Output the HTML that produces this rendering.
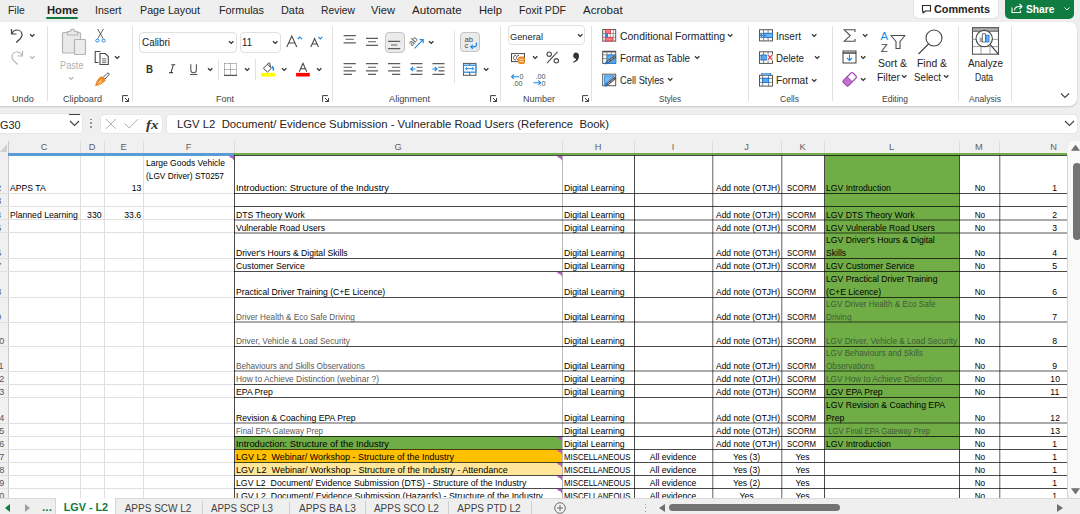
<!DOCTYPE html>
<html><head><meta charset="utf-8"><style>
html,body{margin:0;padding:0;}
body{width:1080px;height:514px;overflow:hidden;position:relative;background:#efefef;font-family:"Liberation Sans", sans-serif;}
body>div,body>svg{position:absolute;}
.t{white-space:pre;}
</style></head><body>
<div class="t" style="left:8.00px;top:5px;font-size:11px;line-height:11px;color:#242424;transform:scaleX(0.9417);transform-origin:left;">File</div>
<div class="t" style="left:46.60px;top:5px;font-size:11px;line-height:11px;color:#242424;font-weight:bold;transform:scaleX(1.0209);transform-origin:left;">Home</div>
<div class="t" style="left:95.00px;top:5px;font-size:11px;line-height:11px;color:#242424;transform:scaleX(0.9631);transform-origin:left;">Insert</div>
<div class="t" style="left:140.40px;top:5px;font-size:11px;line-height:11px;color:#242424;transform:scaleX(0.9712);transform-origin:left;">Page Layout</div>
<div class="t" style="left:218.80px;top:5px;font-size:11px;line-height:11px;color:#242424;transform:scaleX(0.9816);transform-origin:left;">Formulas</div>
<div class="t" style="left:280.90px;top:5px;font-size:11px;line-height:11px;color:#242424;transform:scaleX(0.9892);transform-origin:left;">Data</div>
<div class="t" style="left:320.50px;top:5px;font-size:11px;line-height:11px;color:#242424;transform:scaleX(0.9424);transform-origin:left;">Review</div>
<div class="t" style="left:371.00px;top:5px;font-size:11px;line-height:11px;color:#242424;transform:scaleX(1.0145);transform-origin:left;">View</div>
<div class="t" style="left:412.00px;top:5px;font-size:11px;line-height:11px;color:#242424;transform:scaleX(1.0532);transform-origin:left;">Automate</div>
<div class="t" style="left:478.50px;top:5px;font-size:11px;line-height:11px;color:#242424;transform:scaleX(1.0166);transform-origin:left;">Help</div>
<div class="t" style="left:518.50px;top:5px;font-size:11px;line-height:11px;color:#242424;transform:scaleX(0.9610);transform-origin:left;">Foxit PDF</div>
<div class="t" style="left:582.60px;top:5px;font-size:11px;line-height:11px;color:#242424;transform:scaleX(1.0443);transform-origin:left;">Acrobat</div>
<div style="left:46px;top:17px;width:32px;height:2px;background:#107c41;border-radius:1px"></div>
<div style="left:914px;top:-4px;width:84px;height:22px;background:#fff;border-radius:5px;box-shadow:0 0 0 1px #e3e3e3"></div>
<svg style="left:921px;top:4px" width="11" height="10" viewBox="0 0 11 10"><path d="M1.5 1.5h8v5.5h-5l-2.5 2v-2h-0.5z" fill="none" stroke="#242424" stroke-width="1.1" stroke-linejoin="round"/></svg>
<div class="t" style="left:934.00px;top:4px;font-size:10.5px;line-height:10.5px;color:#242424;font-weight:bold;transform:scaleX(1.0320);transform-origin:left;">Comments</div>
<div style="left:1005px;top:-4px;width:69px;height:22.6px;background:#107c41;border-radius:5px"></div>
<svg style="left:1011px;top:3px" width="12" height="11" viewBox="0 0 12 11"><path d="M1 4.5v5h8.5v-2" fill="none" stroke="#fff" stroke-width="1.1"/><path d="M3.5 7.5c0-3 2-4 5-4h1.5M8.5 1l2.5 2.5-2.5 2.5" fill="none" stroke="#fff" stroke-width="1.1"/></svg>
<div class="t" style="left:1026.00px;top:4px;font-size:10.5px;line-height:10.5px;color:#fff;font-weight:bold;transform:scaleX(0.9764);transform-origin:left;">Share</div>
<svg style="left:1064px;top:7px" width="6" height="4" viewBox="0 0 6 4"><path d="M0.5 0.5l2.5 2.5 2.5-2.5" fill="none" stroke="#fff" stroke-width="1"/></svg>
<div style="left:-10px;top:22px;width:1087px;height:84px;background:#fff;border-radius:8px;box-shadow:0 1px 2px rgba(0,0,0,0.18)"></div>
<div style="left:47px;top:26px;width:1px;height:75px;background:#e1e1e1;"></div>
<div style="left:132px;top:26px;width:1px;height:75px;background:#e1e1e1;"></div>
<div style="left:332px;top:26px;width:1px;height:75px;background:#e1e1e1;"></div>
<div style="left:500px;top:26px;width:1px;height:75px;background:#e1e1e1;"></div>
<div style="left:591px;top:26px;width:1px;height:75px;background:#e1e1e1;"></div>
<div style="left:748px;top:26px;width:1px;height:75px;background:#e1e1e1;"></div>
<div style="left:832px;top:26px;width:1px;height:75px;background:#e1e1e1;"></div>
<div style="left:958px;top:26px;width:1px;height:75px;background:#e1e1e1;"></div>
<div style="left:1011px;top:26px;width:1px;height:75px;background:#e1e1e1;"></div>
<div class="t" style="left:12.20px;top:94px;font-size:9.5px;line-height:9.5px;color:#424242;transform:scaleX(0.9596);transform-origin:left;">Undo</div>
<div class="t" style="left:63.00px;top:94px;font-size:9.5px;line-height:9.5px;color:#424242;transform:scaleX(0.9589);transform-origin:left;">Clipboard</div>
<div class="t" style="left:216.00px;top:94px;font-size:9.5px;line-height:9.5px;color:#424242;transform:scaleX(0.9466);transform-origin:left;">Font</div>
<div class="t" style="left:389.00px;top:94px;font-size:9.5px;line-height:9.5px;color:#424242;transform:scaleX(0.9704);transform-origin:left;">Alignment</div>
<div class="t" style="left:523.00px;top:94px;font-size:9.5px;line-height:9.5px;color:#424242;transform:scaleX(0.9468);transform-origin:left;">Number</div>
<div class="t" style="left:659.00px;top:94px;font-size:9.5px;line-height:9.5px;color:#424242;transform:scaleX(0.8502);transform-origin:left;">Styles</div>
<div class="t" style="left:780.00px;top:94px;font-size:9.5px;line-height:9.5px;color:#424242;transform:scaleX(0.8994);transform-origin:left;">Cells</div>
<div class="t" style="left:882.00px;top:94px;font-size:9.5px;line-height:9.5px;color:#424242;transform:scaleX(0.8946);transform-origin:left;">Editing</div>
<div class="t" style="left:969.00px;top:94px;font-size:9.5px;line-height:9.5px;color:#424242;transform:scaleX(0.9046);transform-origin:left;">Analysis</div>
<svg style="left:121.6px;top:95px" width="8" height="8" viewBox="0 0 8 8"><path d="M0.6 6.8V0.6H5.9M2.9 3.1L6.4 6.4M3.2 6.5H6.6V3" fill="none" stroke="#3a3a3a" stroke-width="1"/></svg>
<svg style="left:321.8px;top:95px" width="8" height="8" viewBox="0 0 8 8"><path d="M0.6 6.8V0.6H5.9M2.9 3.1L6.4 6.4M3.2 6.5H6.6V3" fill="none" stroke="#3a3a3a" stroke-width="1"/></svg>
<svg style="left:489.8px;top:95px" width="8" height="8" viewBox="0 0 8 8"><path d="M0.6 6.8V0.6H5.9M2.9 3.1L6.4 6.4M3.2 6.5H6.6V3" fill="none" stroke="#3a3a3a" stroke-width="1"/></svg>
<svg style="left:581.6px;top:95px" width="8" height="8" viewBox="0 0 8 8"><path d="M0.6 6.8V0.6H5.9M2.9 3.1L6.4 6.4M3.2 6.5H6.6V3" fill="none" stroke="#3a3a3a" stroke-width="1"/></svg>
<svg style="left:9px;top:27px" width="16" height="16" viewBox="0 0 16 16"><path d="M2.5 2v5h5" fill="none" stroke="#424242" stroke-width="1.2"/><path d="M2.8 6.8c1.2-2.8 3-3.8 5.2-3.8 2.8 0 5 2.2 5 5 0 2-1 3-2 4l-3.8 3.5" fill="none" stroke="#424242" stroke-width="1.2"/></svg>
<svg style="left:29.3px;top:32.9px" width="6.4" height="5.2" viewBox="0 0 6.4 5.2"><path d="M1 1.2l2.2 2.2 2.2 -2.2" fill="none" stroke="#333333" stroke-width="1.25"/></svg>
<svg style="left:9px;top:49px" width="16" height="16" viewBox="0 0 16 16"><path d="M13.5 2v5h-5" fill="none" stroke="#b8b8b8" stroke-width="1.2"/><path d="M13.2 6.8c-1.2-2.8-3-3.8-5.2-3.8-2.8 0-5 2.2-5 5 0 2 1 3 2 4l3.8 3.5" fill="none" stroke="#b8b8b8" stroke-width="1.2"/></svg>
<svg style="left:29.3px;top:54.9px" width="6.4" height="5.2" viewBox="0 0 6.4 5.2"><path d="M1 1.2l2.2 2.2 2.2 -2.2" fill="none" stroke="#b8b8b8" stroke-width="1.25"/></svg>
<svg style="left:60px;top:27px" width="28" height="30" viewBox="60 27 28 30"><path d="M62.5 33.5Q62.5 32.5 63.5 32.5H67.5V31.5H70.5Q70.5 29 72.5 29Q74.5 29 74.5 31.5H77.5V32.5H79.5Q80.5 32.5 80.5 33.5V52Q80.5 53 79.5 53H63.5Q62.5 53 62.5 52Z" fill="#e9e9e9" stroke="#b4b4b4" stroke-width="1.2"/><path d="M67.5 31.5V35H77.5V31.5" fill="none" stroke="#b4b4b4" stroke-width="1.1"/><rect x="74.5" y="39.5" width="11" height="15" rx="0.8" fill="#ececec" stroke="#b4b4b4" stroke-width="1.2"/></svg>
<div class="t" style="left:60.00px;top:61px;font-size:10px;line-height:10px;color:#b0b0b0;transform:scaleX(0.9188);transform-origin:left;">Paste</div>
<svg style="left:68.3px;top:75.9px" width="6.4" height="5.2" viewBox="0 0 6.4 5.2"><path d="M1 1.2l2.2 2.2 2.2 -2.2" fill="none" stroke="#b8b8b8" stroke-width="1.25"/></svg>
<svg style="left:92px;top:27px" width="20" height="62" viewBox="92 27 20 62"><path d="M97.6 29L103.2 38.6M103.4 29L97.8 38.6" fill="none" stroke="#4a4a4a" stroke-width="0.9"/><ellipse cx="97.4" cy="40.6" rx="1.7" ry="1.4" fill="none" stroke="#1e88e5" stroke-width="1"/><ellipse cx="103.6" cy="40.6" rx="1.7" ry="1.4" fill="none" stroke="#1e88e5" stroke-width="1"/><path d="M100.5 51.5H95.2V62.5H98.5" fill="none" stroke="#4a4a4a" stroke-width="1.1"/><path d="M100 53.5H105.2L108.3 56.6V64.5H100Z" fill="#fff" stroke="#4a4a4a" stroke-width="1.1"/><path d="M102 58.8H106.3M102 60.8H106.3M102 62.6H106.3" stroke="#4a4a4a" stroke-width="0.8"/><path d="M103 77.5L107 73.5Q108 72.6 108.8 73.4Q109.6 74.2 108.7 75.1L104.7 79.2Z" fill="#fff" stroke="#4a4a4a" stroke-width="1"/><path d="M101.8 76.6L105.4 80.2L103.2 82.4Q100.5 85 95.5 85.6Q96.5 80.6 99.3 77.9Z" fill="#f08a1c" stroke="#e07010" stroke-width="0.6"/><path d="M97.6 83.4L101.6 79.6M98.9 84.6L102.6 81" stroke="#fff" stroke-width="0.7"/></svg>
<svg style="left:114.3px;top:55.4px" width="6.4" height="5.2" viewBox="0 0 6.4 5.2"><path d="M1 1.2l2.2 2.2 2.2 -2.2" fill="none" stroke="#333333" stroke-width="1.25"/></svg>
<div style="left:139px;top:32.3px;width:98px;height:20.3px;background:#fff;border:1px solid #e0e0e0;border-radius:4px;box-sizing:border-box"></div>
<div class="t" style="left:141.50px;top:38px;font-size:10.2px;line-height:10.2px;color:#242424;transform:scaleX(0.9697);transform-origin:left;">Calibri</div>
<svg style="left:227.8px;top:39.9px" width="6.4" height="5.2" viewBox="0 0 6.4 5.2"><path d="M1 1.2l2.2 2.2 2.2 -2.2" fill="none" stroke="#333333" stroke-width="1.25"/></svg>
<div style="left:239.6px;top:32.3px;width:41px;height:20.3px;background:#fff;border:1px solid #e0e0e0;border-radius:4px;box-sizing:border-box"></div>
<div class="t" style="left:241.50px;top:38px;font-size:10.2px;line-height:10.2px;color:#242424;transform:scaleX(0.9453);transform-origin:left;">11</div>
<svg style="left:271.8px;top:39.9px" width="6.4" height="5.2" viewBox="0 0 6.4 5.2"><path d="M1 1.2l2.2 2.2 2.2 -2.2" fill="none" stroke="#333333" stroke-width="1.25"/></svg>
<svg style="left:284px;top:32px" width="42" height="18" viewBox="284 32 42 18"><path d="M286.8 47L291.8 36L296.8 47M288.6 43H295" fill="none" stroke="#4a4a4a" stroke-width="1.1"/><path d="M297.6 39.2L299.8 37L302 39.2" fill="none" stroke="#1e88e5" stroke-width="1.2"/><path d="M310.8 47L314.6 38.6L318.4 47M312.2 44H317" fill="none" stroke="#4a4a4a" stroke-width="1.1"/><path d="M318.4 36.8L320.4 38.8L322.4 36.8" fill="none" stroke="#1e88e5" stroke-width="1.2"/></svg>
<div class="t" style="left:146.20px;top:64px;font-size:11.5px;line-height:11.5px;color:#333;font-weight:bold;transform:scaleX(0.8421);transform-origin:left;">B</div>
<svg style="left:166px;top:60px" width="34" height="18" viewBox="166 60 34 18"><path d="M171.3 64.7H175.3M173.4 64.7L171 72.6M169.1 72.6H173" fill="none" stroke="#444" stroke-width="1.05"/><path d="M190.8 64.3V69.4Q190.8 72.7 193.6 72.7Q196.4 72.7 196.4 69.4V64.3" fill="none" stroke="#555" stroke-width="1.1"/><path d="M190 74.5H197.2" stroke="#555" stroke-width="1.1"/></svg>
<svg style="left:207.3px;top:66.9px" width="6.4" height="5.2" viewBox="0 0 6.4 5.2"><path d="M1 1.2l2.2 2.2 2.2 -2.2" fill="none" stroke="#333333" stroke-width="1.25"/></svg>
<div style="left:218px;top:59px;width:1px;height:21px;background:#e1e1e1;"></div>
<svg style="left:222px;top:60px" width="18" height="18" viewBox="222 60 18 18"><path d="M224.5 63.5H236.5M224.5 69.5H236.5M224.5 63.5V75M230.5 63.5V75M236.5 63.5V75" fill="none" stroke="#555" stroke-width="0.9" stroke-dasharray="0.9 1.1"/><path d="M224 75.4H237" stroke="#555" stroke-width="1.3"/></svg>
<svg style="left:243.8px;top:66.9px" width="6.4" height="5.2" viewBox="0 0 6.4 5.2"><path d="M1 1.2l2.2 2.2 2.2 -2.2" fill="none" stroke="#333333" stroke-width="1.25"/></svg>
<div style="left:255px;top:59px;width:1px;height:21px;background:#e1e1e1;"></div>
<svg style="left:259px;top:60px" width="18" height="18" viewBox="259 60 18 18"><path d="M263.4 68.3L267.5 64.2L271.5 68.2L267.5 72.1Z" fill="#fff" stroke="#444" stroke-width="1"/><path d="M267.5 64.2L268.4 63.1Q269.2 62.4 269.8 63.2L270.4 67.1" fill="none" stroke="#444" stroke-width="1"/><path d="M272 66.3Q274 67.8 273.3 70.6" fill="none" stroke="#1e88e5" stroke-width="1.5"/><rect x="261.1" y="72.9" width="13.9" height="3.7" fill="#ffff00"/></svg>
<svg style="left:280.8px;top:66.9px" width="6.4" height="5.2" viewBox="0 0 6.4 5.2"><path d="M1 1.2l2.2 2.2 2.2 -2.2" fill="none" stroke="#333333" stroke-width="1.25"/></svg>
<svg style="left:294px;top:60px" width="18" height="18" viewBox="294 60 18 18"><path d="M299.3 71.8L303 63.2L306.8 71.8M300.6 68.7H305.4" fill="none" stroke="#444" stroke-width="1.05"/><rect x="296.1" y="72.9" width="13.7" height="3.6" fill="#ff0000"/></svg>
<svg style="left:316.3px;top:66.9px" width="6.4" height="5.2" viewBox="0 0 6.4 5.2"><path d="M1 1.2l2.2 2.2 2.2 -2.2" fill="none" stroke="#333333" stroke-width="1.25"/></svg>
<div style="left:384.5px;top:32.4px;width:20px;height:20.2px;background:#ebebeb;border:1px solid #c4c4c4;border-radius:4px;box-sizing:border-box"></div>
<div style="left:454px;top:31px;width:1px;height:52px;background:#e1e1e1;"></div>
<div style="left:460.4px;top:32.4px;width:20.1px;height:20.1px;background:#ebebeb;border:1px solid #c4c4c4;border-radius:4px;box-sizing:border-box"></div>
<svg style="left:336px;top:28px" width="160" height="56" viewBox="336 28 160 56"><path d="M343.6 35.6H355.8M345.5 39.2H353.8M343.6 42.8H355.8M366 38.3H378M368 41.7H376M366 45.3H378M388 41.4H400.2M391 45.0H397.2M388 48.6H400.2M343.6 63.6H355.8M343.6 67.2H352M343.6 70.8H355.8M343.6 74.3H352M366 63.6H378M368 67.2H376M366 70.8H378M368 74.3H376M388 63.6H400.2M392 67.2H400.2M388 70.8H400.2M392 74.3H400.2M410.5 63.6H422.5M416.5 67.2H422.5M416.5 70.8H422.5M410.5 74.3H422.5M432.5 63.6H444.5M438.5 67.2H444.5M438.5 70.8H444.5M432.5 74.3H444.5" stroke="#5c5c5c" stroke-width="1.15" fill="none"/><path d="M415.5 69H410.8M413 66.8L410.8 69L413 71.2" stroke="#1e88e5" stroke-width="1.2" fill="none"/><path d="M432.3 69H437M434.8 66.8L437 69L434.8 71.2" stroke="#1e88e5" stroke-width="1.2" fill="none"/><text x="0" y="0" font-family="Liberation Sans" font-size="8.5" fill="#4a4a4a" transform="translate(412 46.5) rotate(-50)">ab</text><path d="M414.5 48.3L423 39.8M419.5 39.6H423.2V43.3" stroke="#1e88e5" stroke-width="1.1" fill="none"/><text x="464.5" y="42" font-family="Liberation Sans" font-size="7.6" fill="#4a4a4a">ab</text><text x="464.5" y="47.8" font-family="Liberation Sans" font-size="7.6" fill="#4a4a4a">c</text><path d="M476.5 42.5V44.5C476.5 46 475.5 46.8 474 46.8H470.8M472.8 44.8L470.8 46.8L472.8 48.8" stroke="#1e88e5" stroke-width="1.2" fill="none"/><rect x="463.5" y="63.4" width="12.4" height="11.9" fill="#fff" stroke="#555" stroke-width="1"/><rect x="463.5" y="65.2" width="12.4" height="7" fill="#fff" stroke="#1e88e5" stroke-width="1.2"/><path d="M469.7 63.4V65.2M469.7 72.2V75.3" stroke="#555" stroke-width="1"/><path d="M465.6 68.7H473.8M467.2 67.1L465.6 68.7L467.2 70.3M472.2 67.1L473.8 68.7L472.2 70.3" stroke="#1e88e5" stroke-width="1" fill="none"/></svg>
<svg style="left:428.3px;top:39.9px" width="6.4" height="5.2" viewBox="0 0 6.4 5.2"><path d="M1 1.2l2.2 2.2 2.2 -2.2" fill="none" stroke="#333333" stroke-width="1.25"/></svg>
<svg style="left:482.8px;top:66.9px" width="6.4" height="5.2" viewBox="0 0 6.4 5.2"><path d="M1 1.2l2.2 2.2 2.2 -2.2" fill="none" stroke="#333333" stroke-width="1.25"/></svg>
<div style="left:507.7px;top:25.4px;width:77.6px;height:20px;background:#fff;border:1px solid #e0e0e0;border-radius:4px;box-sizing:border-box"></div>
<div class="t" style="left:510.00px;top:32px;font-size:9.5px;line-height:9.5px;color:#242424;transform:scaleX(0.9760);transform-origin:left;">General</div>
<svg style="left:576.8px;top:33.4px" width="6.4" height="5.2" viewBox="0 0 6.4 5.2"><path d="M1 1.2l2.2 2.2 2.2 -2.2" fill="none" stroke="#333333" stroke-width="1.25"/></svg>
<svg style="left:504px;top:44px" width="88" height="46" viewBox="504 44 88 46"><rect x="511.5" y="53.6" width="13" height="8" fill="#fff" stroke="#4a4a4a" stroke-width="1"/><path d="M516 55.5C514 55.5 513.5 56.5 513.5 57.8C513.5 59 514 60 516 60M519 55.5C517 55.5 516.5 56.5 516.5 57.8C516.5 59 517 60 519 60" stroke="#4a4a4a" stroke-width="0.9" fill="none"/><rect x="518.2" y="56.6" width="6.6" height="7.4" rx="1.6" fill="#f08a1c"/><path d="M519.4 59.3H523.6M519.4 61.5H523.6" stroke="#fff" stroke-width="0.8"/><path d="M547 63.2L557.5 51.8" stroke="#4a4a4a" stroke-width="1.1"/><circle cx="549.2" cy="54.2" r="2.2" fill="none" stroke="#4a4a4a" stroke-width="1.1"/><circle cx="556.3" cy="60.8" r="2.2" fill="none" stroke="#4a4a4a" stroke-width="1.1"/><path d="M575.8 52.6C577.8 52.6 579 54 579 56.2C579 59.5 576.8 61.8 573.3 62.8L572.9 62C574.8 61.2 575.9 60 576.2 58.8C574.5 58.8 573.2 57.6 573.2 55.8C573.2 54 574.3 52.6 575.8 52.6Z" fill="#333"/><path d="M519 76.7H511.6M513.8 74.5L511.6 76.7L513.8 78.9" stroke="#1e88e5" stroke-width="1.1" fill="none"/><text x="519.5" y="79.3" font-family="Liberation Sans" font-size="7.2" fill="#4a4a4a">0</text><text x="512.5" y="86" font-family="Liberation Sans" font-size="7.2" fill="#4a4a4a">.00</text><text x="535.5" y="79.3" font-family="Liberation Sans" font-size="7.2" fill="#4a4a4a">.00</text><path d="M533.3 82.7H540.6M538.4 80.5L540.6 82.7L538.4 84.9" stroke="#1e88e5" stroke-width="1.1" fill="none"/><text x="539.5" y="86" font-family="Liberation Sans" font-size="7.2" fill="#4a4a4a">.0</text></svg>
<svg style="left:532.3px;top:54.9px" width="6.4" height="5.2" viewBox="0 0 6.4 5.2"><path d="M1 1.2l2.2 2.2 2.2 -2.2" fill="none" stroke="#333333" stroke-width="1.25"/></svg>
<svg style="left:600px;top:27px" width="18" height="17" viewBox="600 27 18 17"><rect x="602.7" y="29.5" width="13" height="11.6" fill="#fff" stroke="#555" stroke-width="1"/><path d="M602.7 33.5H615.7M602.7 37.3H615.7M605.3 29.5V41.1M610.3 29.5V41.1M613.3 29.5V41.1" stroke="#777" stroke-width="0.7"/><rect x="605.3" y="29.6" width="5" height="3.9" fill="#f47a86" stroke="#e3343f" stroke-width="0.8"/><rect x="605.3" y="33.6" width="2.8" height="3.6" fill="#1e88e5"/><rect x="605.3" y="37.4" width="7" height="3.6" fill="#f47a86" stroke="#e3343f" stroke-width="0.8"/></svg>
<div class="t" style="left:620.00px;top:32px;font-size:10.2px;line-height:10.2px;color:#242424;transform:scaleX(1.0244);transform-origin:left;">Conditional Formatting</div>
<svg style="left:726.8px;top:33.4px" width="6.4" height="5.2" viewBox="0 0 6.4 5.2"><path d="M1 1.2l2.2 2.2 2.2 -2.2" fill="none" stroke="#333333" stroke-width="1.25"/></svg>
<svg style="left:600px;top:49px" width="18" height="17" viewBox="600 49 18 17"><rect x="602.7" y="51.4" width="13" height="12" fill="#fff" stroke="#555" stroke-width="1"/><path d="M602.7 51.6H615.7" stroke="#555" stroke-width="1.6"/><path d="M602.7 54.8H615.7M602.7 58.6H615.7M606.9 51.4V63.4M611.3 51.4V63.4" stroke="#666" stroke-width="0.7"/><path d="M607 55H615.7V63.4H607Z" fill="#5aa7ec" stroke="#1e88e5" stroke-width="0.8"/><path d="M605.8 63.2L615.6 56.2" stroke="#444" stroke-width="2.6"/><path d="M606.6 62.6L614.8 56.8" stroke="#fff" stroke-width="1" stroke-dasharray="1 0.8"/><path d="M604.6 64.2Q605.2 61.8 607.6 61.4L608.6 62.6Q607.6 64.8 604.6 64.2Z" fill="#1e78d5"/></svg>
<div class="t" style="left:620.00px;top:54px;font-size:10.2px;line-height:10.2px;color:#242424;transform:scaleX(0.9608);transform-origin:left;">Format as Table</div>
<svg style="left:693.8px;top:55.4px" width="6.4" height="5.2" viewBox="0 0 6.4 5.2"><path d="M1 1.2l2.2 2.2 2.2 -2.2" fill="none" stroke="#333333" stroke-width="1.25"/></svg>
<svg style="left:600px;top:71px" width="18" height="17" viewBox="600 71 18 17"><rect x="602.7" y="74.2" width="13" height="11.5" fill="#fff" stroke="#555" stroke-width="1"/><path d="M604.6 75.8H614.4L604.6 84.4Z" fill="#7dbaf0" stroke="#1e88e5" stroke-width="0.9"/><path d="M605.8 85.4L615.6 77.6" stroke="#444" stroke-width="2.6"/><path d="M606.6 84.8L614.8 78.2" stroke="#fff" stroke-width="1" stroke-dasharray="1 0.8"/><path d="M604.4 86.4Q605 84 607.4 83.6L608.4 84.8Q607.4 87 604.4 86.4Z" fill="#1e78d5"/></svg>
<div class="t" style="left:620.00px;top:76px;font-size:10.2px;line-height:10.2px;color:#242424;transform:scaleX(0.9143);transform-origin:left;">Cell Styles</div>
<svg style="left:666.8px;top:77.4px" width="6.4" height="5.2" viewBox="0 0 6.4 5.2"><path d="M1 1.2l2.2 2.2 2.2 -2.2" fill="none" stroke="#333333" stroke-width="1.25"/></svg>
<svg style="left:757px;top:27px" width="18" height="17" viewBox="757 27 18 17"><rect x="759.5" y="29.7" width="13" height="11.2" fill="#fff" stroke="#555" stroke-width="1"/><path d="M763.6 29.7V40.9M768.1 29.7V40.9M759.5 33.4H772.5M759.5 37.3H772.5" stroke="#666" stroke-width="0.8"/><rect x="764" y="33.3" width="8.6" height="4.2" fill="#6fb3ee" stroke="#1e78d5" stroke-width="0.9"/><path d="M766.5 35.3H760.2M762.4 33.1L760.2 35.3L762.4 37.5" fill="none" stroke="#2a8ae0" stroke-width="1.2"/></svg>
<div class="t" style="left:776.00px;top:32px;font-size:10.2px;line-height:10.2px;color:#242424;transform:scaleX(0.9810);transform-origin:left;">Insert</div>
<svg style="left:810.8px;top:33.4px" width="6.4" height="5.2" viewBox="0 0 6.4 5.2"><path d="M1 1.2l2.2 2.2 2.2 -2.2" fill="none" stroke="#333333" stroke-width="1.25"/></svg>
<svg style="left:757px;top:49px" width="18" height="17" viewBox="757 49 18 17"><rect x="759.5" y="51.8" width="13" height="11.6" fill="#fff" stroke="#555" stroke-width="1"/><path d="M763.6 51.8V63.4M768.1 51.8V63.4M759.5 55.3H772.5M759.5 59.8H772.5" stroke="#666" stroke-width="0.8"/><path d="M761 55H766L767.6 57.5L766 60H761Z" fill="#5aa7ec" stroke="#1e78d5" stroke-width="0.9"/><rect x="767.2" y="54.4" width="5.6" height="6.2" fill="#fff"/><path d="M768 55.2L772 59.6M772 55.2L768 59.6" stroke="#e8333f" stroke-width="1.2"/></svg>
<div class="t" style="left:776.00px;top:54px;font-size:10.2px;line-height:10.2px;color:#242424;transform:scaleX(0.9507);transform-origin:left;">Delete</div>
<svg style="left:813.8px;top:55.4px" width="6.4" height="5.2" viewBox="0 0 6.4 5.2"><path d="M1 1.2l2.2 2.2 2.2 -2.2" fill="none" stroke="#333333" stroke-width="1.25"/></svg>
<svg style="left:757px;top:71px" width="18" height="17" viewBox="757 71 18 17"><rect x="759.5" y="75.3" width="13" height="10.8" fill="#fff" stroke="#555" stroke-width="1"/><path d="M762.6 75.3V86.1M768.6 75.3V86.1M759.5 78.4H772.5M759.5 82.4H772.5" stroke="#666" stroke-width="0.8"/><rect x="762.6" y="78.2" width="6" height="4.4" fill="#5aa7ec" stroke="#1e78d5" stroke-width="0.9"/><path d="M761.6 73.9H770.6M761.6 72.9V74.9M770.6 72.9V74.9" stroke="#2a8ae0" stroke-width="1.1"/></svg>
<div class="t" style="left:776.00px;top:76px;font-size:10.2px;line-height:10.2px;color:#242424;transform:scaleX(0.9918);transform-origin:left;">Format</div>
<svg style="left:810.8px;top:77.9px" width="6.4" height="5.2" viewBox="0 0 6.4 5.2"><path d="M1 1.2l2.2 2.2 2.2 -2.2" fill="none" stroke="#333333" stroke-width="1.25"/></svg>
<svg style="left:840px;top:26px" width="20" height="20" viewBox="840 26 20 20"><path d="M855 32V29.8H844.3L850.2 35.6L844.3 41.2H855V39" fill="none" stroke="#4a4a4a" stroke-width="1.1" stroke-linejoin="miter"/></svg>
<svg style="left:861.8px;top:33.4px" width="6.4" height="5.2" viewBox="0 0 6.4 5.2"><path d="M1 1.2l2.2 2.2 2.2 -2.2" fill="none" stroke="#333333" stroke-width="1.25"/></svg>
<svg style="left:842px;top:50px" width="15" height="14" viewBox="0 0 15 14"><rect x="1" y="1" width="13" height="12" fill="#fff" stroke="#424242" stroke-width="1"/><path d="M1 3h13" stroke="#424242" stroke-width="1.5"/><path d="M7.5 4.5v6M5 8l2.5 2.5 2.5-2.5" fill="none" stroke="#1e88e5" stroke-width="1.1"/></svg>
<svg style="left:859.8px;top:55.4px" width="6.4" height="5.2" viewBox="0 0 6.4 5.2"><path d="M1 1.2l2.2 2.2 2.2 -2.2" fill="none" stroke="#333333" stroke-width="1.25"/></svg>
<svg style="left:840px;top:70px" width="20" height="20" viewBox="840 70 20 20"><path d="M843.5 80.5L851 73Q852 72 853 73L856 76Q857 77 856 78L848.5 85.5Q847.5 86.5 846.5 85.5L843.5 82.5Q842.5 81.5 843.5 80.5Z" fill="#fff" stroke="#a040b0" stroke-width="1.1"/><path d="M843.5 80.5L847.2 76.8L852.2 81.8L848.5 85.5Q847.5 86.5 846.5 85.5L843.5 82.5Q842.5 81.5 843.5 80.5Z" fill="#c070d0" stroke="#a040b0" stroke-width="1"/></svg>
<svg style="left:859.8px;top:77.4px" width="6.4" height="5.2" viewBox="0 0 6.4 5.2"><path d="M1 1.2l2.2 2.2 2.2 -2.2" fill="none" stroke="#333333" stroke-width="1.25"/></svg>
<svg style="left:876px;top:26px" width="34" height="30" viewBox="876 26 34 30"><text x="880.6" y="40" font-family="Liberation Sans" font-size="11.5" fill="#1e88e5">A</text><text x="880.8" y="52" font-family="Liberation Sans" font-size="11.5" fill="#4a4a4a">Z</text><path d="M891 35.5H905L900 41.5V48.5H896V41.5Z" fill="none" stroke="#4a4a4a" stroke-width="1.1" stroke-linejoin="round"/></svg>
<div class="t" style="left:878.00px;top:59px;font-size:10.2px;line-height:10.2px;color:#242424;transform:scaleX(1.0243);transform-origin:left;">Sort &amp;</div>
<div class="t" style="left:877.00px;top:73px;font-size:10.2px;line-height:10.2px;color:#242424;transform:scaleX(1.0159);transform-origin:left;">Filter</div>
<svg style="left:900.8px;top:74.4px" width="6.4" height="5.2" viewBox="0 0 6.4 5.2"><path d="M1 1.2l2.2 2.2 2.2 -2.2" fill="none" stroke="#333333" stroke-width="1.25"/></svg>
<svg style="left:917px;top:28px" width="28" height="27" viewBox="0 0 28 27"><circle cx="17" cy="10" r="8" fill="none" stroke="#424242" stroke-width="1.1"/><path d="M11.5 16l-10 10" stroke="#424242" stroke-width="1.1"/></svg>
<div class="t" style="left:917.00px;top:59px;font-size:10.2px;line-height:10.2px;color:#242424;transform:scaleX(1.0186);transform-origin:left;">Find &amp;</div>
<div class="t" style="left:914.00px;top:73px;font-size:10.2px;line-height:10.2px;color:#242424;transform:scaleX(0.9531);transform-origin:left;">Select</div>
<svg style="left:942.8px;top:74.4px" width="6.4" height="5.2" viewBox="0 0 6.4 5.2"><path d="M1 1.2l2.2 2.2 2.2 -2.2" fill="none" stroke="#333333" stroke-width="1.25"/></svg>
<svg style="left:968px;top:25px" width="34" height="33" viewBox="968 25 34 33"><rect x="972.5" y="27.8" width="26" height="26.4" fill="#fff" stroke="#555" stroke-width="1.1"/><rect x="972.5" y="27.8" width="26" height="3.4" fill="#b4b4b4" stroke="#555" stroke-width="1"/><path d="M972.5 39.4H998.5M972.5 46.6H998.5M981 46.6V54.2M990 46.6V54.2" stroke="#888" stroke-width="0.8"/><circle cx="984.2" cy="38.6" r="8.2" fill="#fff" stroke="#444" stroke-width="1.1"/><rect x="979.6" y="37.6" width="2.4" height="4.4" fill="#a8a8a8"/><rect x="982.3" y="33.8" width="3.2" height="8.2" fill="#fff" stroke="#555" stroke-width="0.8"/><rect x="986" y="35.2" width="3" height="6.8" fill="#6fb3ee" stroke="#1e78d5" stroke-width="0.8"/><path d="M990 44.4L998.6 54.4" stroke="#444" stroke-width="1.2"/></svg>
<div class="t" style="left:968.00px;top:59px;font-size:10.2px;line-height:10.2px;color:#242424;transform:scaleX(0.9655);transform-origin:left;">Analyze</div>
<div class="t" style="left:975.00px;top:73px;font-size:10.2px;line-height:10.2px;color:#242424;transform:scaleX(0.8360);transform-origin:left;">Data</div>
<svg style="left:1060px;top:92px" width="10" height="7" viewBox="0 0 10 7"><path d="M1 1.5l4 4 4-4" fill="none" stroke="#424242" stroke-width="1.1"/></svg>
<div style="left:-10px;top:114px;width:92px;height:19px;background:#fff;border-radius:4px;box-shadow:0 0 0 1px #e6e6e6"></div>
<div class="t" style="left:0.00px;top:120px;font-size:11px;line-height:11px;color:#242424;transform:scaleX(0.9857);transform-origin:left;">G30</div>
<div style="left:69px;top:113.5px;width:11px;height:1.2px;background:#424242;"></div>
<svg style="left:69px;top:120px" width="11" height="7" viewBox="0 0 11 7"><path d="M1 1l4.5 4.5 4.5-4.5" fill="none" stroke="#424242" stroke-width="1.1"/></svg>
<div style="left:90.3px;top:118.5px;width:1.8px;height:1.8px;background:#7a7a7a;border-radius:1px"></div>
<div style="left:90.3px;top:122.3px;width:1.8px;height:1.8px;background:#7a7a7a;border-radius:1px"></div>
<div style="left:90.3px;top:126.1px;width:1.8px;height:1.8px;background:#7a7a7a;border-radius:1px"></div>
<div style="left:101px;top:115px;width:61px;height:18px;background:#fff;border-radius:4px;box-shadow:0 0 0 1px #e6e6e6"></div>
<svg style="left:104px;top:117px" width="14" height="14" viewBox="104 117 14 14"><path d="M106 119L115.8 128.8M115.8 119L106 128.8" stroke="#b0b0b0" stroke-width="1"/></svg>
<svg style="left:122px;top:117px" width="18" height="14" viewBox="122 117 18 14"><path d="M124.5 123.5L129.2 128L138 119.2" fill="none" stroke="#b0b0b0" stroke-width="1"/></svg>
<div class="t" style="left:145.80px;top:118px;font-size:13px;line-height:13px;color:#333;font-weight:bold;font-style:italic;font-family:&quot;Liberation Serif&quot;, serif;transform:scaleX(1.1527);transform-origin:left;">fx</div>
<div style="left:166.6px;top:115px;width:910.6px;height:18px;background:#fff;border-radius:4px;box-shadow:0 0 0 1px #e6e6e6"></div>
<div class="t" style="left:177.00px;top:119px;font-size:11.2px;line-height:11.2px;color:#242424;transform:scaleX(1.0107);transform-origin:left;">LGV L2  Document/ Evidence Submission - Vulnerable Road Users (Reference  Book)</div>
<svg style="left:1064px;top:120px" width="11" height="7" viewBox="0 0 11 7"><path d="M1 1l4.5 4.5 4.5-4.5" fill="none" stroke="#424242" stroke-width="1.1"/></svg>
<div style="left:0px;top:134px;width:1067px;height:19px;background:#f0f0f0;"></div>
<div style="left:8px;top:141px;width:1px;height:12px;background:#dcdcdc;"></div>
<div style="left:80px;top:141px;width:1px;height:12px;background:#dcdcdc;"></div>
<div style="left:104px;top:141px;width:1px;height:12px;background:#dcdcdc;"></div>
<div style="left:143px;top:141px;width:1px;height:12px;background:#dcdcdc;"></div>
<div style="left:234px;top:141px;width:1px;height:12px;background:#dcdcdc;"></div>
<div style="left:562px;top:141px;width:1px;height:12px;background:#dcdcdc;"></div>
<div style="left:634px;top:141px;width:1px;height:12px;background:#dcdcdc;"></div>
<div style="left:712px;top:141px;width:1px;height:12px;background:#dcdcdc;"></div>
<div style="left:781px;top:141px;width:1px;height:12px;background:#dcdcdc;"></div>
<div style="left:824px;top:141px;width:1px;height:12px;background:#dcdcdc;"></div>
<div style="left:959px;top:141px;width:1px;height:12px;background:#dcdcdc;"></div>
<div style="left:999px;top:141px;width:1px;height:12px;background:#dcdcdc;"></div>
<div class="t" style="left:40.64px;top:143px;font-size:9.3px;line-height:9.3px;color:#616161;">C</div>
<div class="t" style="left:88.64px;top:143px;font-size:9.3px;line-height:9.3px;color:#616161;">D</div>
<div class="t" style="left:120.40px;top:143px;font-size:9.3px;line-height:9.3px;color:#616161;">E</div>
<div class="t" style="left:185.66px;top:143px;font-size:9.3px;line-height:9.3px;color:#616161;">F</div>
<div class="t" style="left:394.38px;top:143px;font-size:9.3px;line-height:9.3px;color:#616161;">G</div>
<div class="t" style="left:594.64px;top:143px;font-size:9.3px;line-height:9.3px;color:#616161;">H</div>
<div class="t" style="left:671.70px;top:143px;font-size:9.3px;line-height:9.3px;color:#616161;">I</div>
<div class="t" style="left:744.17px;top:143px;font-size:9.3px;line-height:9.3px;color:#616161;">J</div>
<div class="t" style="left:799.40px;top:143px;font-size:9.3px;line-height:9.3px;color:#616161;">K</div>
<div class="t" style="left:888.91px;top:143px;font-size:9.3px;line-height:9.3px;color:#616161;">L</div>
<div class="t" style="left:975.12px;top:143px;font-size:9.3px;line-height:9.3px;color:#616161;">M</div>
<div class="t" style="left:1050.14px;top:143px;font-size:9.3px;line-height:9.3px;color:#616161;">N</div>
<svg style="left:0px;top:140px" width="8" height="13" viewBox="0 0 8 13"><path d="M7 4v8h-7z" fill="#d0d0d0"/></svg>
<div style="left:8px;top:155px;width:1059px;height:343px;background:#fff;"></div>
<div style="left:0px;top:155px;width:8px;height:343px;background:#f0f0f0;"></div>
<div style="left:8px;top:141px;width:1px;height:357px;background:#c9c9c9;"></div>
<div style="left:825px;top:155px;width:134px;height:294px;background:#70ad47;"></div>
<div style="left:235px;top:436px;width:327px;height:13px;background:#70ad47;"></div>
<div style="left:235px;top:449px;width:327px;height:13px;background:#ffc000;"></div>
<div style="left:235px;top:462px;width:327px;height:13px;background:#ffe699;"></div>
<div style="left:0px;top:193px;width:234px;height:1px;background:#e0e0e0;"></div>
<div style="left:0px;top:206px;width:234px;height:1px;background:#e0e0e0;"></div>
<div style="left:0px;top:219px;width:234px;height:1px;background:#e0e0e0;"></div>
<div style="left:0px;top:232px;width:234px;height:1px;background:#e0e0e0;"></div>
<div style="left:0px;top:258px;width:234px;height:1px;background:#e0e0e0;"></div>
<div style="left:0px;top:271px;width:234px;height:1px;background:#e0e0e0;"></div>
<div style="left:0px;top:297px;width:234px;height:1px;background:#e0e0e0;"></div>
<div style="left:0px;top:322px;width:234px;height:1px;background:#e0e0e0;"></div>
<div style="left:0px;top:346px;width:234px;height:1px;background:#e0e0e0;"></div>
<div style="left:0px;top:371px;width:234px;height:1px;background:#e0e0e0;"></div>
<div style="left:0px;top:384px;width:234px;height:1px;background:#e0e0e0;"></div>
<div style="left:0px;top:397px;width:234px;height:1px;background:#e0e0e0;"></div>
<div style="left:0px;top:423px;width:234px;height:1px;background:#e0e0e0;"></div>
<div style="left:0px;top:436px;width:234px;height:1px;background:#e0e0e0;"></div>
<div style="left:0px;top:449px;width:234px;height:1px;background:#e0e0e0;"></div>
<div style="left:0px;top:462px;width:234px;height:1px;background:#e0e0e0;"></div>
<div style="left:0px;top:475px;width:234px;height:1px;background:#e0e0e0;"></div>
<div style="left:0px;top:488px;width:234px;height:1px;background:#e0e0e0;"></div>
<div style="left:80px;top:155px;width:1px;height:343px;background:#e0e0e0;"></div>
<div style="left:104px;top:155px;width:1px;height:343px;background:#e0e0e0;"></div>
<div style="left:143px;top:155px;width:1px;height:343px;background:#e0e0e0;"></div>
<div style="left:562px;top:155px;width:1px;height:343px;background:#b8b8b8;"></div>
<div style="left:1067px;top:155px;width:1px;height:343px;background:#d4d4d4;"></div>
<div style="left:234px;top:155px;width:1px;height:343px;background:rgba(0,0,0,0.71);"></div>
<div style="left:634px;top:155px;width:1px;height:343px;background:rgba(0,0,0,0.71);"></div>
<div style="left:824px;top:155px;width:1px;height:343px;background:rgba(0,0,0,0.71);"></div>
<div style="left:959px;top:155px;width:1px;height:343px;background:rgba(0,0,0,0.71);"></div>
<div style="left:712px;top:155px;width:1px;height:343px;background:rgba(0,0,0,0.44);"></div>
<div style="left:713px;top:155px;width:1px;height:343px;background:rgba(0,0,0,0.18);"></div>
<div style="left:781px;top:155px;width:1px;height:343px;background:rgba(0,0,0,0.44);"></div>
<div style="left:782px;top:155px;width:1px;height:343px;background:rgba(0,0,0,0.18);"></div>
<div style="left:999px;top:155px;width:1px;height:343px;background:rgba(0,0,0,0.44);"></div>
<div style="left:1000px;top:155px;width:1px;height:343px;background:rgba(0,0,0,0.18);"></div>
<div style="left:234px;top:193px;width:833px;height:1px;background:rgba(0,0,0,0.71);"></div>
<div style="left:234px;top:206px;width:833px;height:1px;background:rgba(0,0,0,0.71);"></div>
<div style="left:234px;top:258px;width:833px;height:1px;background:rgba(0,0,0,0.71);"></div>
<div style="left:234px;top:271px;width:833px;height:1px;background:rgba(0,0,0,0.71);"></div>
<div style="left:234px;top:297px;width:833px;height:1px;background:rgba(0,0,0,0.71);"></div>
<div style="left:234px;top:346px;width:833px;height:1px;background:rgba(0,0,0,0.71);"></div>
<div style="left:234px;top:384px;width:833px;height:1px;background:rgba(0,0,0,0.71);"></div>
<div style="left:234px;top:397px;width:833px;height:1px;background:rgba(0,0,0,0.71);"></div>
<div style="left:234px;top:436px;width:833px;height:1px;background:rgba(0,0,0,0.71);"></div>
<div style="left:234px;top:449px;width:833px;height:1px;background:rgba(0,0,0,0.71);"></div>
<div style="left:234px;top:462px;width:833px;height:1px;background:rgba(0,0,0,0.71);"></div>
<div style="left:234px;top:475px;width:833px;height:1px;background:rgba(0,0,0,0.71);"></div>
<div style="left:234px;top:488px;width:833px;height:1px;background:rgba(0,0,0,0.71);"></div>
<div style="left:234px;top:219px;width:833px;height:2px;background:rgba(0,0,0,0.33);"></div>
<div style="left:234px;top:232px;width:833px;height:2px;background:rgba(0,0,0,0.33);"></div>
<div style="left:234px;top:321px;width:833px;height:2px;background:rgba(0,0,0,0.33);"></div>
<div style="left:234px;top:370px;width:833px;height:2px;background:rgba(0,0,0,0.33);"></div>
<div style="left:234px;top:422px;width:833px;height:2px;background:rgba(0,0,0,0.33);"></div>
<div style="left:8px;top:153px;width:226px;height:3px;background:#5b9bd5;"></div>
<div style="left:234px;top:152.5px;width:833px;height:2.5px;background:#70ad47;"></div>
<div style="left:234px;top:155px;width:833px;height:1px;background:rgba(0,0,0,0.71);"></div>
<svg style="left:228.8px;top:155.5px" width="5.2" height="5" viewBox="0 0 5.2 5"><path d="M0 0H5.2V5L3.6 2.6L1.2 1.4Z" fill="#bb55cc"/></svg>
<svg style="left:556.8px;top:155.5px" width="5.2" height="5" viewBox="0 0 5.2 5"><path d="M0 0H5.2V5L3.6 2.6L1.2 1.4Z" fill="#bb55cc"/></svg>
<svg style="left:556.8px;top:271.5px" width="5.2" height="5" viewBox="0 0 5.2 5"><path d="M0 0H5.2V5L3.6 2.6L1.2 1.4Z" fill="#bb55cc"/></svg>
<svg style="left:556.8px;top:436.5px" width="5.2" height="5" viewBox="0 0 5.2 5"><path d="M0 0H5.2V5L3.6 2.6L1.2 1.4Z" fill="#bb55cc"/></svg>
<svg style="left:556.8px;top:449.5px" width="5.2" height="5" viewBox="0 0 5.2 5"><path d="M0 0H5.2V5L3.6 2.6L1.2 1.4Z" fill="#bb55cc"/></svg>
<svg style="left:556.8px;top:462.5px" width="5.2" height="5" viewBox="0 0 5.2 5"><path d="M0 0H5.2V5L3.6 2.6L1.2 1.4Z" fill="#bb55cc"/></svg>
<svg style="left:556.8px;top:475.5px" width="5.2" height="5" viewBox="0 0 5.2 5"><path d="M0 0H5.2V5L3.6 2.6L1.2 1.4Z" fill="#bb55cc"/></svg>
<svg style="left:556.8px;top:488.5px" width="5.2" height="5" viewBox="0 0 5.2 5"><path d="M0 0H5.2V5L3.6 2.6L1.2 1.4Z" fill="#bb55cc"/></svg>
<div class="t" style="left:-3.85px;top:183px;font-size:9.5px;line-height:9.5px;color:#555;transform:scaleX(0.9500);transform-origin:center;">2</div>
<div class="t" style="left:-3.85px;top:196px;font-size:9.5px;line-height:9.5px;color:#555;transform:scaleX(0.9500);transform-origin:center;">3</div>
<div class="t" style="left:-3.85px;top:210px;font-size:9.5px;line-height:9.5px;color:#555;transform:scaleX(0.9500);transform-origin:center;">4</div>
<div class="t" style="left:-3.85px;top:223px;font-size:9.5px;line-height:9.5px;color:#555;transform:scaleX(0.9500);transform-origin:center;">5</div>
<div class="t" style="left:-3.85px;top:248px;font-size:9.5px;line-height:9.5px;color:#555;transform:scaleX(0.9500);transform-origin:center;">6</div>
<div class="t" style="left:-3.85px;top:261px;font-size:9.5px;line-height:9.5px;color:#555;transform:scaleX(0.9500);transform-origin:center;">7</div>
<div class="t" style="left:-3.85px;top:287px;font-size:9.5px;line-height:9.5px;color:#555;transform:scaleX(0.9500);transform-origin:center;">8</div>
<div class="t" style="left:-3.85px;top:312px;font-size:9.5px;line-height:9.5px;color:#555;transform:scaleX(0.9500);transform-origin:center;">9</div>
<div class="t" style="left:-6.49px;top:336px;font-size:9.5px;line-height:9.5px;color:#555;transform:scaleX(0.9500);transform-origin:center;">10</div>
<div class="t" style="left:-6.14px;top:361px;font-size:9.5px;line-height:9.5px;color:#555;transform:scaleX(0.9500);transform-origin:center;">11</div>
<div class="t" style="left:-6.49px;top:374px;font-size:9.5px;line-height:9.5px;color:#555;transform:scaleX(0.9500);transform-origin:center;">12</div>
<div class="t" style="left:-6.49px;top:387px;font-size:9.5px;line-height:9.5px;color:#555;transform:scaleX(0.9500);transform-origin:center;">13</div>
<div class="t" style="left:-6.49px;top:413px;font-size:9.5px;line-height:9.5px;color:#555;transform:scaleX(0.9500);transform-origin:center;">14</div>
<div class="t" style="left:-6.49px;top:426px;font-size:9.5px;line-height:9.5px;color:#555;transform:scaleX(0.9500);transform-origin:center;">15</div>
<div class="t" style="left:-6.49px;top:439px;font-size:9.5px;line-height:9.5px;color:#555;transform:scaleX(0.9500);transform-origin:center;">16</div>
<div class="t" style="left:-6.49px;top:452px;font-size:9.5px;line-height:9.5px;color:#555;transform:scaleX(0.9500);transform-origin:center;">17</div>
<div class="t" style="left:-6.49px;top:465px;font-size:9.5px;line-height:9.5px;color:#555;transform:scaleX(0.9500);transform-origin:center;">18</div>
<div class="t" style="left:-6.49px;top:478px;font-size:9.5px;line-height:9.5px;color:#555;transform:scaleX(0.9500);transform-origin:center;">19</div>
<div class="t" style="left:-6.49px;top:491px;font-size:9.5px;line-height:9.5px;color:#555;transform:scaleX(0.9500);transform-origin:center;">20</div>
<div class="t" style="left:10.00px;top:184px;font-size:9.3px;line-height:9.3px;color:#000;transform:scaleX(0.9300);transform-origin:left;">APPS TA</div>
<div class="t" style="left:130.66px;top:184px;font-size:9.3px;line-height:9.3px;color:#000;transform:scaleX(0.9300);transform-origin:right;">13</div>
<div class="t" style="left:145.80px;top:159px;font-size:9.3px;line-height:9.3px;color:#000;transform:scaleX(0.9151);transform-origin:left;">Large Goods Vehicle</div>
<div class="t" style="left:145.80px;top:172px;font-size:9.3px;line-height:9.3px;color:#000;transform:scaleX(0.8932);transform-origin:left;">(LGV Driver) ST0257</div>
<div class="t" style="left:236.00px;top:184px;font-size:9.3px;line-height:9.3px;color:#000;">Introduction: Structure of the Industry</div>
<div class="t" style="left:564.00px;top:184px;font-size:9.3px;line-height:9.3px;color:#000;transform:scaleX(0.9395);transform-origin:left;">Digital Learning</div>
<div class="t" style="left:715.60px;top:184px;font-size:9.3px;line-height:9.3px;color:#000;transform:scaleX(0.9106);transform-origin:left;">Add note (OTJH)</div>
<div class="t" style="left:787.40px;top:184px;font-size:9.3px;line-height:9.3px;color:#000;transform:scaleX(0.8379);transform-origin:left;">SCORM</div>
<div class="t" style="left:826.00px;top:184px;font-size:9.3px;line-height:9.3px;color:#000;transform:scaleX(0.9300);transform-origin:left;">LGV Introduction</div>
<div class="t" style="left:973.95px;top:184px;font-size:9.3px;line-height:9.3px;color:#000;transform:scaleX(0.8830);transform-origin:center;">No</div>
<div class="t" style="left:1052.11px;top:184px;font-size:9.3px;line-height:9.3px;color:#000;transform:scaleX(0.9300);transform-origin:center;">1</div>
<div class="t" style="left:10.00px;top:211px;font-size:9.3px;line-height:9.3px;color:#000;transform:scaleX(0.9300);transform-origin:left;">Planned Learning</div>
<div class="t" style="left:86.48px;top:211px;font-size:9.3px;line-height:9.3px;color:#000;transform:scaleX(0.9300);transform-origin:right;">330</div>
<div class="t" style="left:122.89px;top:211px;font-size:9.3px;line-height:9.3px;color:#000;transform:scaleX(0.9300);transform-origin:right;">33.6</div>
<div class="t" style="left:236.00px;top:211px;font-size:9.3px;line-height:9.3px;color:#000;transform:scaleX(0.9300);transform-origin:left;">DTS Theory Work</div>
<div class="t" style="left:564.00px;top:211px;font-size:9.3px;line-height:9.3px;color:#000;transform:scaleX(0.9395);transform-origin:left;">Digital Learning</div>
<div class="t" style="left:715.60px;top:211px;font-size:9.3px;line-height:9.3px;color:#000;transform:scaleX(0.9106);transform-origin:left;">Add note (OTJH)</div>
<div class="t" style="left:787.40px;top:211px;font-size:9.3px;line-height:9.3px;color:#000;transform:scaleX(0.8379);transform-origin:left;">SCORM</div>
<div class="t" style="left:826.00px;top:211px;font-size:9.3px;line-height:9.3px;color:#000;transform:scaleX(0.9300);transform-origin:left;">LGV DTS Theory Work</div>
<div class="t" style="left:973.95px;top:211px;font-size:9.3px;line-height:9.3px;color:#000;transform:scaleX(0.8830);transform-origin:center;">No</div>
<div class="t" style="left:1052.11px;top:211px;font-size:9.3px;line-height:9.3px;color:#000;transform:scaleX(0.9300);transform-origin:center;">2</div>
<div class="t" style="left:236.00px;top:224px;font-size:9.3px;line-height:9.3px;color:#000;transform:scaleX(0.9300);transform-origin:left;">Vulnerable Road Users</div>
<div class="t" style="left:564.00px;top:224px;font-size:9.3px;line-height:9.3px;color:#000;transform:scaleX(0.9395);transform-origin:left;">Digital Learning</div>
<div class="t" style="left:715.60px;top:224px;font-size:9.3px;line-height:9.3px;color:#000;transform:scaleX(0.9106);transform-origin:left;">Add note (OTJH)</div>
<div class="t" style="left:787.40px;top:224px;font-size:9.3px;line-height:9.3px;color:#000;transform:scaleX(0.8379);transform-origin:left;">SCORM</div>
<div class="t" style="left:826.00px;top:224px;font-size:9.3px;line-height:9.3px;color:#000;transform:scaleX(0.9300);transform-origin:left;">LGV Vulnerable Road Users</div>
<div class="t" style="left:973.95px;top:224px;font-size:9.3px;line-height:9.3px;color:#000;transform:scaleX(0.8830);transform-origin:center;">No</div>
<div class="t" style="left:1052.11px;top:224px;font-size:9.3px;line-height:9.3px;color:#000;transform:scaleX(0.9300);transform-origin:center;">3</div>
<div class="t" style="left:236.00px;top:249px;font-size:9.3px;line-height:9.3px;color:#000;transform:scaleX(0.9300);transform-origin:left;">Driver&#x27;s Hours &amp; Digital Skills</div>
<div class="t" style="left:564.00px;top:249px;font-size:9.3px;line-height:9.3px;color:#000;transform:scaleX(0.9395);transform-origin:left;">Digital Learning</div>
<div class="t" style="left:715.60px;top:249px;font-size:9.3px;line-height:9.3px;color:#000;transform:scaleX(0.9106);transform-origin:left;">Add note (OTJH)</div>
<div class="t" style="left:787.40px;top:249px;font-size:9.3px;line-height:9.3px;color:#000;transform:scaleX(0.8379);transform-origin:left;">SCORM</div>
<div class="t" style="left:826.00px;top:236px;font-size:9.3px;line-height:9.3px;color:#000;transform:scaleX(0.9300);transform-origin:left;">LGV Driver&#x27;s Hours &amp; Digital</div>
<div class="t" style="left:826.00px;top:249px;font-size:9.3px;line-height:9.3px;color:#000;transform:scaleX(0.9300);transform-origin:left;">Skills</div>
<div class="t" style="left:973.95px;top:249px;font-size:9.3px;line-height:9.3px;color:#000;transform:scaleX(0.8830);transform-origin:center;">No</div>
<div class="t" style="left:1052.11px;top:249px;font-size:9.3px;line-height:9.3px;color:#000;transform:scaleX(0.9300);transform-origin:center;">4</div>
<div class="t" style="left:236.00px;top:262px;font-size:9.3px;line-height:9.3px;color:#000;transform:scaleX(0.9300);transform-origin:left;">Customer Service</div>
<div class="t" style="left:564.00px;top:262px;font-size:9.3px;line-height:9.3px;color:#000;transform:scaleX(0.9395);transform-origin:left;">Digital Learning</div>
<div class="t" style="left:715.60px;top:262px;font-size:9.3px;line-height:9.3px;color:#000;transform:scaleX(0.9106);transform-origin:left;">Add note (OTJH)</div>
<div class="t" style="left:787.40px;top:262px;font-size:9.3px;line-height:9.3px;color:#000;transform:scaleX(0.8379);transform-origin:left;">SCORM</div>
<div class="t" style="left:826.00px;top:262px;font-size:9.3px;line-height:9.3px;color:#000;transform:scaleX(0.9300);transform-origin:left;">LGV Customer Service</div>
<div class="t" style="left:973.95px;top:262px;font-size:9.3px;line-height:9.3px;color:#000;transform:scaleX(0.8830);transform-origin:center;">No</div>
<div class="t" style="left:1052.11px;top:262px;font-size:9.3px;line-height:9.3px;color:#000;transform:scaleX(0.9300);transform-origin:center;">5</div>
<div class="t" style="left:236.00px;top:288px;font-size:9.3px;line-height:9.3px;color:#000;transform:scaleX(0.9300);transform-origin:left;">Practical Driver Training (C+E Licence)</div>
<div class="t" style="left:564.00px;top:288px;font-size:9.3px;line-height:9.3px;color:#000;transform:scaleX(0.9395);transform-origin:left;">Digital Learning</div>
<div class="t" style="left:715.60px;top:288px;font-size:9.3px;line-height:9.3px;color:#000;transform:scaleX(0.9106);transform-origin:left;">Add note (OTJH)</div>
<div class="t" style="left:787.40px;top:288px;font-size:9.3px;line-height:9.3px;color:#000;transform:scaleX(0.8379);transform-origin:left;">SCORM</div>
<div class="t" style="left:826.00px;top:275px;font-size:9.3px;line-height:9.3px;color:#000;transform:scaleX(0.9300);transform-origin:left;">LGV Practical Driver Training</div>
<div class="t" style="left:826.00px;top:288px;font-size:9.3px;line-height:9.3px;color:#000;transform:scaleX(0.9300);transform-origin:left;">(C+E Licence)</div>
<div class="t" style="left:973.95px;top:288px;font-size:9.3px;line-height:9.3px;color:#000;transform:scaleX(0.8830);transform-origin:center;">No</div>
<div class="t" style="left:1052.11px;top:288px;font-size:9.3px;line-height:9.3px;color:#000;transform:scaleX(0.9300);transform-origin:center;">6</div>
<div class="t" style="left:236.00px;top:314px;font-size:8.2px;line-height:8.2px;color:#595959;">Driver Health &amp; Eco Safe Driving</div>
<div class="t" style="left:564.00px;top:313px;font-size:9.3px;line-height:9.3px;color:#000;transform:scaleX(0.9395);transform-origin:left;">Digital Learning</div>
<div class="t" style="left:715.60px;top:313px;font-size:9.3px;line-height:9.3px;color:#000;transform:scaleX(0.9106);transform-origin:left;">Add note (OTJH)</div>
<div class="t" style="left:787.40px;top:313px;font-size:9.3px;line-height:9.3px;color:#000;transform:scaleX(0.8379);transform-origin:left;">SCORM</div>
<div class="t" style="left:826.00px;top:301px;font-size:8.2px;line-height:8.2px;color:#3f5c36;">LGV Driver Health &amp; Eco Safe</div>
<div class="t" style="left:826.00px;top:314px;font-size:8.2px;line-height:8.2px;color:#3f5c36;">Driving</div>
<div class="t" style="left:973.95px;top:313px;font-size:9.3px;line-height:9.3px;color:#000;transform:scaleX(0.8830);transform-origin:center;">No</div>
<div class="t" style="left:1052.11px;top:313px;font-size:9.3px;line-height:9.3px;color:#000;transform:scaleX(0.9300);transform-origin:center;">7</div>
<div class="t" style="left:236.00px;top:338px;font-size:8.2px;line-height:8.2px;color:#595959;transform:scaleX(1.0142);transform-origin:left;">Driver, Vehicle &amp; Load Security</div>
<div class="t" style="left:564.00px;top:337px;font-size:9.3px;line-height:9.3px;color:#000;transform:scaleX(0.9395);transform-origin:left;">Digital Learning</div>
<div class="t" style="left:715.60px;top:337px;font-size:9.3px;line-height:9.3px;color:#000;transform:scaleX(0.9106);transform-origin:left;">Add note (OTJH)</div>
<div class="t" style="left:787.40px;top:337px;font-size:9.3px;line-height:9.3px;color:#000;transform:scaleX(0.8379);transform-origin:left;">SCORM</div>
<div class="t" style="left:826.00px;top:338px;font-size:8.2px;line-height:8.2px;color:#3f5c36;">LGV Driver, Vehicle &amp; Load Security</div>
<div class="t" style="left:973.95px;top:337px;font-size:9.3px;line-height:9.3px;color:#000;transform:scaleX(0.8830);transform-origin:center;">No</div>
<div class="t" style="left:1052.11px;top:337px;font-size:9.3px;line-height:9.3px;color:#000;transform:scaleX(0.9300);transform-origin:center;">8</div>
<div class="t" style="left:236.00px;top:363px;font-size:8.2px;line-height:8.2px;color:#595959;">Behaviours and Skills Observations</div>
<div class="t" style="left:564.00px;top:362px;font-size:9.3px;line-height:9.3px;color:#000;transform:scaleX(0.9395);transform-origin:left;">Digital Learning</div>
<div class="t" style="left:715.60px;top:362px;font-size:9.3px;line-height:9.3px;color:#000;transform:scaleX(0.9106);transform-origin:left;">Add note (OTJH)</div>
<div class="t" style="left:787.40px;top:362px;font-size:9.3px;line-height:9.3px;color:#000;transform:scaleX(0.8379);transform-origin:left;">SCORM</div>
<div class="t" style="left:826.00px;top:350px;font-size:8.2px;line-height:8.2px;color:#3f5c36;">LGV Behaviours and Skills</div>
<div class="t" style="left:826.00px;top:363px;font-size:8.2px;line-height:8.2px;color:#3f5c36;">Observations</div>
<div class="t" style="left:973.95px;top:362px;font-size:9.3px;line-height:9.3px;color:#000;transform:scaleX(0.8830);transform-origin:center;">No</div>
<div class="t" style="left:1052.11px;top:362px;font-size:9.3px;line-height:9.3px;color:#000;transform:scaleX(0.9300);transform-origin:center;">9</div>
<div class="t" style="left:236.00px;top:376px;font-size:8.2px;line-height:8.2px;color:#595959;transform:scaleX(1.0236);transform-origin:left;">How to Achieve Distinction (webinar ?)</div>
<div class="t" style="left:564.00px;top:375px;font-size:9.3px;line-height:9.3px;color:#000;transform:scaleX(0.9395);transform-origin:left;">Digital Learning</div>
<div class="t" style="left:715.60px;top:375px;font-size:9.3px;line-height:9.3px;color:#000;transform:scaleX(0.9106);transform-origin:left;">Add note (OTJH)</div>
<div class="t" style="left:787.40px;top:375px;font-size:9.3px;line-height:9.3px;color:#000;transform:scaleX(0.8379);transform-origin:left;">SCORM</div>
<div class="t" style="left:826.00px;top:376px;font-size:8.2px;line-height:8.2px;color:#3f5c36;transform:scaleX(1.0075);transform-origin:left;">LGV How to Achieve Distinction</div>
<div class="t" style="left:973.95px;top:375px;font-size:9.3px;line-height:9.3px;color:#000;transform:scaleX(0.8830);transform-origin:center;">No</div>
<div class="t" style="left:1049.53px;top:375px;font-size:9.3px;line-height:9.3px;color:#000;transform:scaleX(0.9300);transform-origin:center;">10</div>
<div class="t" style="left:236.00px;top:388px;font-size:9.3px;line-height:9.3px;color:#000;transform:scaleX(0.9300);transform-origin:left;">EPA Prep</div>
<div class="t" style="left:564.00px;top:388px;font-size:9.3px;line-height:9.3px;color:#000;transform:scaleX(0.9395);transform-origin:left;">Digital Learning</div>
<div class="t" style="left:715.60px;top:388px;font-size:9.3px;line-height:9.3px;color:#000;transform:scaleX(0.9106);transform-origin:left;">Add note (OTJH)</div>
<div class="t" style="left:787.40px;top:388px;font-size:9.3px;line-height:9.3px;color:#000;transform:scaleX(0.8379);transform-origin:left;">SCORM</div>
<div class="t" style="left:826.00px;top:388px;font-size:9.3px;line-height:9.3px;color:#000;transform:scaleX(0.9300);transform-origin:left;">LGV EPA Prep</div>
<div class="t" style="left:973.95px;top:388px;font-size:9.3px;line-height:9.3px;color:#000;transform:scaleX(0.8830);transform-origin:center;">No</div>
<div class="t" style="left:1049.87px;top:388px;font-size:9.3px;line-height:9.3px;color:#000;transform:scaleX(0.9300);transform-origin:center;">11</div>
<div class="t" style="left:236.00px;top:414px;font-size:9.3px;line-height:9.3px;color:#000;transform:scaleX(0.9300);transform-origin:left;">Revision &amp; Coaching EPA Prep</div>
<div class="t" style="left:564.00px;top:414px;font-size:9.3px;line-height:9.3px;color:#000;transform:scaleX(0.9395);transform-origin:left;">Digital Learning</div>
<div class="t" style="left:715.60px;top:414px;font-size:9.3px;line-height:9.3px;color:#000;transform:scaleX(0.9106);transform-origin:left;">Add note (OTJH)</div>
<div class="t" style="left:787.40px;top:414px;font-size:9.3px;line-height:9.3px;color:#000;transform:scaleX(0.8379);transform-origin:left;">SCORM</div>
<div class="t" style="left:826.00px;top:401px;font-size:9.3px;line-height:9.3px;color:#000;transform:scaleX(0.9300);transform-origin:left;">LGV Revision &amp; Coaching EPA</div>
<div class="t" style="left:826.00px;top:414px;font-size:9.3px;line-height:9.3px;color:#000;transform:scaleX(0.9300);transform-origin:left;">Prep</div>
<div class="t" style="left:973.95px;top:414px;font-size:9.3px;line-height:9.3px;color:#000;transform:scaleX(0.8830);transform-origin:center;">No</div>
<div class="t" style="left:1049.53px;top:414px;font-size:9.3px;line-height:9.3px;color:#000;transform:scaleX(0.9300);transform-origin:center;">12</div>
<div class="t" style="left:236.00px;top:428px;font-size:8.2px;line-height:8.2px;color:#595959;transform:scaleX(0.9721);transform-origin:left;">Final EPA Gateway Prep</div>
<div class="t" style="left:564.00px;top:427px;font-size:9.3px;line-height:9.3px;color:#000;transform:scaleX(0.9395);transform-origin:left;">Digital Learning</div>
<div class="t" style="left:715.60px;top:427px;font-size:9.3px;line-height:9.3px;color:#000;transform:scaleX(0.9106);transform-origin:left;">Add note (OTJH)</div>
<div class="t" style="left:787.40px;top:427px;font-size:9.3px;line-height:9.3px;color:#000;transform:scaleX(0.8379);transform-origin:left;">SCORM</div>
<div class="t" style="left:826.00px;top:428px;font-size:8.2px;line-height:8.2px;color:#3f5c36;transform:scaleX(0.9417);transform-origin:left;"> LGV Final EPA Gateway Prep</div>
<div class="t" style="left:973.95px;top:427px;font-size:9.3px;line-height:9.3px;color:#000;transform:scaleX(0.8830);transform-origin:center;">No</div>
<div class="t" style="left:1049.53px;top:427px;font-size:9.3px;line-height:9.3px;color:#000;transform:scaleX(0.9300);transform-origin:center;">13</div>
<div class="t" style="left:236.00px;top:440px;font-size:9.3px;line-height:9.3px;color:#000;">Introduction: Structure of the Industry</div>
<div class="t" style="left:564.00px;top:440px;font-size:9.3px;line-height:9.3px;color:#000;transform:scaleX(0.9395);transform-origin:left;">Digital Learning</div>
<div class="t" style="left:715.60px;top:440px;font-size:9.3px;line-height:9.3px;color:#000;transform:scaleX(0.9106);transform-origin:left;">Add note (OTJH)</div>
<div class="t" style="left:787.40px;top:440px;font-size:9.3px;line-height:9.3px;color:#000;transform:scaleX(0.8379);transform-origin:left;">SCORM</div>
<div class="t" style="left:826.00px;top:440px;font-size:9.3px;line-height:9.3px;color:#000;transform:scaleX(0.9300);transform-origin:left;">LGV Introduction</div>
<div class="t" style="left:973.95px;top:440px;font-size:9.3px;line-height:9.3px;color:#000;transform:scaleX(0.8830);transform-origin:center;">No</div>
<div class="t" style="left:1052.11px;top:440px;font-size:9.3px;line-height:9.3px;color:#000;transform:scaleX(0.9300);transform-origin:center;">1</div>
<div class="t" style="left:236.00px;top:453px;font-size:9.3px;line-height:9.3px;color:#000;transform:scaleX(0.9669);transform-origin:left;">LGV L2  Webinar/ Workshop - Structure of the Industry</div>
<div class="t" style="left:564.00px;top:453px;font-size:9.3px;line-height:9.3px;color:#000;transform:scaleX(0.8400);transform-origin:left;">MISCELLANEOUS</div>
<div class="t" style="left:647.93px;top:453px;font-size:9.3px;line-height:9.3px;color:#000;transform:scaleX(0.9300);transform-origin:center;">All evidence</div>
<div class="t" style="left:731.94px;top:453px;font-size:9.3px;line-height:9.3px;color:#000;transform:scaleX(0.9300);transform-origin:center;">Yes (3)</div>
<div class="t" style="left:794.91px;top:453px;font-size:9.3px;line-height:9.3px;color:#000;transform:scaleX(0.9300);transform-origin:center;">Yes</div>
<div class="t" style="left:973.95px;top:453px;font-size:9.3px;line-height:9.3px;color:#000;transform:scaleX(0.8830);transform-origin:center;">No</div>
<div class="t" style="left:1052.11px;top:453px;font-size:9.3px;line-height:9.3px;color:#000;transform:scaleX(0.9300);transform-origin:center;">1</div>
<div class="t" style="left:236.00px;top:466px;font-size:9.3px;line-height:9.3px;color:#000;transform:scaleX(0.9698);transform-origin:left;">LGV L2  Webinar/ Workshop - Structure of the Industry - Attendance</div>
<div class="t" style="left:564.00px;top:466px;font-size:9.3px;line-height:9.3px;color:#000;transform:scaleX(0.8400);transform-origin:left;">MISCELLANEOUS</div>
<div class="t" style="left:647.93px;top:466px;font-size:9.3px;line-height:9.3px;color:#000;transform:scaleX(0.9300);transform-origin:center;">All evidence</div>
<div class="t" style="left:731.94px;top:466px;font-size:9.3px;line-height:9.3px;color:#000;transform:scaleX(0.9300);transform-origin:center;">Yes (3)</div>
<div class="t" style="left:794.91px;top:466px;font-size:9.3px;line-height:9.3px;color:#000;transform:scaleX(0.9300);transform-origin:center;">Yes</div>
<div class="t" style="left:973.95px;top:466px;font-size:9.3px;line-height:9.3px;color:#000;transform:scaleX(0.8830);transform-origin:center;">No</div>
<div class="t" style="left:1052.11px;top:466px;font-size:9.3px;line-height:9.3px;color:#000;transform:scaleX(0.9300);transform-origin:center;">1</div>
<div class="t" style="left:236.00px;top:479px;font-size:9.3px;line-height:9.3px;color:#000;transform:scaleX(0.9426);transform-origin:left;">LGV L2  Document/ Evidence Submission (DTS) - Structure of the Industry</div>
<div class="t" style="left:564.00px;top:479px;font-size:9.3px;line-height:9.3px;color:#000;transform:scaleX(0.8400);transform-origin:left;">MISCELLANEOUS</div>
<div class="t" style="left:647.93px;top:479px;font-size:9.3px;line-height:9.3px;color:#000;transform:scaleX(0.9300);transform-origin:center;">All evidence</div>
<div class="t" style="left:731.94px;top:479px;font-size:9.3px;line-height:9.3px;color:#000;transform:scaleX(0.9300);transform-origin:center;">Yes (2)</div>
<div class="t" style="left:794.91px;top:479px;font-size:9.3px;line-height:9.3px;color:#000;transform:scaleX(0.9300);transform-origin:center;">Yes</div>
<div class="t" style="left:973.95px;top:479px;font-size:9.3px;line-height:9.3px;color:#000;transform:scaleX(0.8830);transform-origin:center;">No</div>
<div class="t" style="left:1052.11px;top:479px;font-size:9.3px;line-height:9.3px;color:#000;transform:scaleX(0.9300);transform-origin:center;">1</div>
<div class="t" style="left:236.00px;top:492px;font-size:9.3px;line-height:9.3px;color:#000;transform:scaleX(0.9476);transform-origin:left;">LGV L2  Document/ Evidence Submission (Hazards) - Structure of the Industry</div>
<div class="t" style="left:564.00px;top:492px;font-size:9.3px;line-height:9.3px;color:#000;transform:scaleX(0.8400);transform-origin:left;">MISCELLANEOUS</div>
<div class="t" style="left:647.93px;top:492px;font-size:9.3px;line-height:9.3px;color:#000;transform:scaleX(0.9300);transform-origin:center;">All evidence</div>
<div class="t" style="left:738.91px;top:492px;font-size:9.3px;line-height:9.3px;color:#000;transform:scaleX(0.9300);transform-origin:center;">Yes</div>
<div class="t" style="left:794.91px;top:492px;font-size:9.3px;line-height:9.3px;color:#000;transform:scaleX(0.9300);transform-origin:center;">Yes</div>
<div class="t" style="left:973.95px;top:492px;font-size:9.3px;line-height:9.3px;color:#000;transform:scaleX(0.8830);transform-origin:center;">No</div>
<div class="t" style="left:1052.11px;top:492px;font-size:9.3px;line-height:9.3px;color:#000;transform:scaleX(0.9300);transform-origin:center;">1</div>
<div style="left:1068px;top:137px;width:12px;height:361px;background:#efefef;"></div>
<div style="left:1068px;top:141px;width:20px;height:357px;background:#f9f9f9;border-radius:6px 0 0 6px"></div>
<svg style="left:1071px;top:143px" width="9" height="8" viewBox="0 0 9 8"><path d="M0.5 7.5l4-5.5 4 5.5z" fill="#707070" stroke="#707070" stroke-width="0.6" stroke-linejoin="round"/></svg>
<div style="left:1072.8px;top:162.5px;width:8px;height:77px;background:#737373;border-radius:4px"></div>
<svg style="left:1071px;top:488px" width="9" height="8" viewBox="0 0 9 8"><path d="M0.5 0.5l4 5.5 4-5.5z" fill="#707070" stroke="#707070" stroke-width="0.6" stroke-linejoin="round"/></svg>
<div style="left:0px;top:498px;width:1080px;height:16px;background:#efefef;"></div>
<div style="left:0px;top:498px;width:1080px;height:1px;background:#d9d9d9;"></div>
<svg style="left:5px;top:504px" width="5" height="8" viewBox="0 0 5 8"><path d="M5 0v8l-5-4z" fill="#107c41"/></svg>
<svg style="left:25px;top:504px" width="5" height="8" viewBox="0 0 5 8"><path d="M0 0v8l5-4z" fill="#a0a0a0"/></svg>
<div class="t" style="left:41.50px;top:502px;font-size:11px;line-height:11px;color:#107c41;font-weight:bold;transform:scaleX(1.0903);transform-origin:left;">...</div>
<div style="left:56px;top:498px;width:59px;height:16px;background:#fff;box-shadow:-1px 0 0 #d6d6d6, 1px 0 0 #d6d6d6"></div>
<div class="t" style="left:63.70px;top:502px;font-size:10.8px;line-height:10.8px;color:#107c41;font-weight:bold;">LGV - L2</div>
<div class="t" style="left:124.70px;top:504px;font-size:10px;line-height:10px;color:#424242;">APPS SCW L2</div>
<div class="t" style="left:211.00px;top:504px;font-size:10px;line-height:10px;color:#424242;transform:scaleX(0.9725);transform-origin:left;">APPS SCP L3</div>
<div class="t" style="left:298.50px;top:504px;font-size:10px;line-height:10px;color:#424242;transform:scaleX(1.0150);transform-origin:left;">APPS BA L3</div>
<div class="t" style="left:373.90px;top:504px;font-size:10px;line-height:10px;color:#424242;">APPS SCO L2</div>
<div class="t" style="left:457.30px;top:504px;font-size:10px;line-height:10px;color:#424242;">APPS PTD L2</div>
<div style="left:201.8px;top:501px;width:1px;height:13px;background:#d0d0d0;"></div>
<div style="left:289px;top:501px;width:1px;height:13px;background:#d0d0d0;"></div>
<div style="left:365px;top:501px;width:1px;height:13px;background:#d0d0d0;"></div>
<div style="left:448.4px;top:501px;width:1px;height:13px;background:#d0d0d0;"></div>
<div style="left:531px;top:501px;width:1px;height:13px;background:#d0d0d0;"></div>
<svg style="left:554px;top:502px" width="12" height="12" viewBox="0 0 12 12"><circle cx="6" cy="6" r="5.3" fill="none" stroke="#616161" stroke-width="0.9"/><path d="M6 3v6M3 6h6" stroke="#616161" stroke-width="0.9"/></svg>
<div style="left:644.5px;top:503.5px;width:1.3px;height:1.3px;background:#9a9a9a;"></div>
<div style="left:644.5px;top:507px;width:1.3px;height:1.3px;background:#9a9a9a;"></div>
<div style="left:644.5px;top:510.5px;width:1.3px;height:1.3px;background:#9a9a9a;"></div>
<svg style="left:659px;top:504px" width="6" height="8" viewBox="0 0 6 8"><path d="M6 0v8l-6-4z" fill="#6e6e6e"/></svg>
<div style="left:669.4px;top:504px;width:171px;height:7px;background:#737373;border-radius:3.5px"></div>
<svg style="left:1057px;top:504px" width="6" height="8" viewBox="0 0 6 8"><path d="M0 0v8l6-4z" fill="#6e6e6e"/></svg>
</body></html>
